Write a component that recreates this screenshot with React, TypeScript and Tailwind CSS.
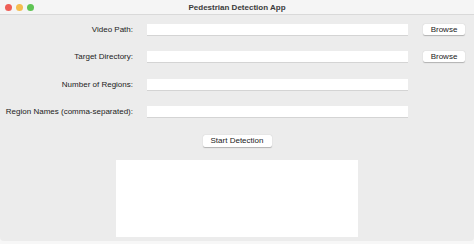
const rows = [
  { label: "Video Path:", browse: true },
  { label: "Target Directory:", browse: true },
  { label: "Number of Regions:", browse: false },
  { label: "Region Names (comma-separated):", browse: false },
];

export default function App() {
  return (
    <div className="h-[244px] w-[474px] bg-[#f7f7f7] font-['Liberation_Sans',Arial,sans-serif]">
      <div className="flex h-[241px] flex-col overflow-hidden rounded-b-[4px] bg-[#ececec]">
        {/* title bar */}
        <div className="relative flex h-[15px] shrink-0 items-center border-b border-[#d9d9d9] bg-[#f5f5f5]">
          <div className="ml-[5px] flex gap-[4px]">
            <span className="h-[7px] w-[7px] rounded-full bg-[#ee5f57]" />
            <span className="h-[7px] w-[7px] rounded-full bg-[#f5bd4f]" />
            <span className="h-[7px] w-[7px] rounded-full bg-[#5fc454]" />
          </div>
          <div className="absolute inset-x-0 top-0 flex h-[15px] items-center justify-center text-[8px] font-bold text-[#3b3b3b]">
            Pedestrian Detection App
          </div>
        </div>

        {/* form */}
        <div className="mt-[9px] grid grid-cols-[133px_261px_43px] gap-x-[14px] gap-y-[15.4px]">
          {rows.map((r) => (
            <div key={r.label} className="contents">
              <div className="flex h-[12px] items-center justify-end whitespace-nowrap text-[8px] text-[#222]">
                {r.label}
              </div>
              <div className="h-[12px] border-b border-[#d4d4d4] bg-white" />
              {r.browse ? (
                <div className="ml-[1px] flex h-[11px] items-center justify-center rounded-[2px] bg-white text-[8px] text-[#222] shadow-[0_0.5px_1px_rgba(0,0,0,0.25)]">
                  Browse
                </div>
              ) : (
                <div />
              )}
            </div>
          ))}
        </div>

        <div className="mt-[17px] flex justify-center">
          <div className="flex h-[12px] w-[69px] items-center justify-center rounded-[2px] bg-white text-[8px] text-[#222] shadow-[0_0.5px_1px_rgba(0,0,0,0.25)]">
            Start Detection
          </div>
        </div>

        <div className="mt-[13px] flex justify-center">
          <div className="h-[77px] w-[242px] bg-white" />
        </div>
      </div>
    </div>
  );
}
